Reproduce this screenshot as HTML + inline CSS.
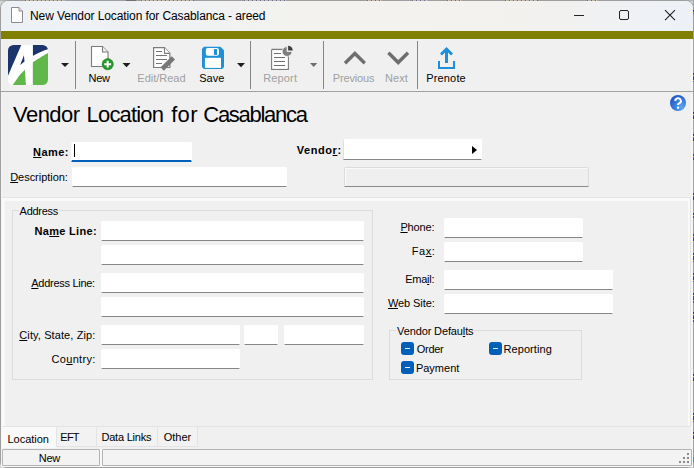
<!DOCTYPE html>
<html><head><meta charset="utf-8">
<style>
*{box-sizing:border-box;margin:0;padding:0}
html,body{width:694px;height:468px;overflow:hidden;background:#d6d6d6;font-family:"Liberation Sans",sans-serif;}
.a{position:absolute}
.t{position:absolute;font-size:11px;line-height:11px;white-space:nowrap;color:#000}
.inp{position:absolute;background:#fff;border:1px solid #fff;border-bottom:1px solid #868686;border-radius:2px 2px 1px 1px;height:20px}
.grp{position:absolute;border:1px solid #dcdcdc}
.cb{position:absolute;width:13px;height:13px;background:#005fb8;border-radius:3px}
.cb:after{content:"";position:absolute;left:4px;top:6px;width:5px;height:1px;background:#e4ecf6}
.sep{position:absolute;top:41px;width:1px;height:48px;background:#858585}
.tab{position:absolute;top:427px;height:20px;background:#f2f2f2;border:1px solid #e4e4e4;border-top:0}
.sp{position:absolute;top:449px;height:17px;background:#f3f3f3;border:1px solid #b4b4b4;border-radius:1px}
u{text-decoration:underline;text-underline-offset:1px;text-decoration-thickness:1px;text-decoration-skip-ink:none}
</style></head><body>
<!-- outside top row -->
<div class="a" style="left:0;top:0;width:694px;height:1px;background:#b4b4b4"></div>
<div class="a" style="left:693px;top:0;width:1px;height:468px;background:#a8a8a8"></div>
<!-- window -->
<div class="a" style="left:0;top:0;width:694px;height:468px;border:1px solid #9e9e9e;border-radius:8px 8px 6px 6px;background:#f0f0f0;overflow:hidden">
 <div class="a" style="left:0;top:0;width:692px;height:30px;background:linear-gradient(90deg,#edf1f6 0%,#eff1f4 22%,#f2f2f0 38%,#f4f2ee 55%,#f2f1ef 80%,#eff1f5 92%,#edf1f7 100%)"></div>
 <div class="a" style="left:0;top:30px;width:692px;height:8px;background:#808000"></div>
</div>
<!-- title bar icons -->
<svg class="a" style="left:10px;top:6px" width="14" height="18" viewBox="0 0 14 18"><path d="M1.5 1.5h7.5l3.5 3.5v11.5h-11z" fill="#fff" stroke="#8a8a8a"/><path d="M9 1.5v3.5h3.5" fill="#e8e8e8" stroke="#8a8a8a"/></svg>
<div class="a" style="left:574px;top:15px;width:10px;height:1px;background:#222"></div>
<div class="a" style="left:619px;top:10px;width:10px;height:10px;border:1px solid #222;border-radius:2px"></div>
<svg class="a" style="left:664px;top:9px" width="12" height="12" viewBox="0 0 12 12"><path d="M1 1.2L11 11.2M11 1.2L1 11.2" stroke="#1a1a1a" stroke-width="1.05"/></svg>
<!-- left/right inner highlight -->
<div class="a" style="left:1px;top:39px;width:1px;height:428px;background:#f6f6f6"></div>
<div class="a" style="left:691px;top:39px;width:2px;height:428px;background:#f6f6f6"></div>
<!-- toolbar -->
<div class="a" style="left:1px;top:91px;width:692px;height:1px;background:#a0a0a0"></div>
<svg class="a" style="left:8px;top:45px" width="40" height="40" viewBox="0 0 40 40">
<defs><clipPath id="lc"><rect x="0" y="0" width="40" height="40" rx="5.5"/></clipPath></defs>
<g clip-path="url(#lc)">
<rect width="40" height="40" fill="#fff"/>
<path d="M-1 -1H13.7L-1 33Z" fill="#1b356b"/>
<path d="M24.9 -1H41V4 C39.5 4.5 34.7 6.1 32 7.2 C29.3 8.3 26.1 10.2 24.9 10.8Z" fill="#1b356b"/>
<path d="M15.9 10.3L16.5 16.4L12.2 19.9Z" fill="#1b356b"/>
<path d="M3.5 42 C3.8 41.6 4 41.3 5.1 39.6 C6.2 37.9 8.6 34.1 10.3 31.9 C12 29.7 13.1 28.6 15.4 26.3 C17.7 24 19.7 20.9 24 17.8 C28.3 14.7 38.2 9.1 41 7.4 V41 H3.5Z" fill="#62b74a"/>
<path d="M16.7 22L24.8 14V41H18Z" fill="#fff"/>
</g></svg>
<div class="sep" style="left:75px"></div>
<div class="sep" style="left:250px"></div>
<div class="sep" style="left:323px"></div>
<div class="sep" style="left:417px"></div>
<svg class="a" style="left:0;top:0" width="694" height="100" viewBox="0 0 694 100">
<!-- logo dropdown -->
<path d="M61 63h8l-4 4z" fill="#1e1e1e"/>
<!-- New -->
<path d="M91.5 46.5h11l5.5 5.5v14.5h-16.5z" fill="#fff" stroke="#7c7c7c" stroke-width="1.1"/>
<path d="M102.5 46.5v5.5h5.5" fill="#f2f2f2" stroke="#7c7c7c" stroke-width="1.1"/>
<circle cx="107.7" cy="64.2" r="5.6" fill="#24992c" stroke="#1d7e24" stroke-width="0.6"/>
<path d="M107.7 60.8v6.8M104.3 64.2h6.8" stroke="#fff" stroke-width="2"/>
<path d="M122.5 63h8l-4 4.3z" fill="#1e1e1e"/>
<!-- Edit/Read -->
<path d="M153.6 47.6h10.9l5.4 5.8v14.1h-16.3z" fill="#fff" stroke="#7c7c7c" stroke-width="1.2"/>
<path d="M164.5 47.6v5.8h5.4" fill="#fff" stroke="#7c7c7c" stroke-width="1.1"/>
<path d="M156 51.5h6M156 55.5h11M156 59.5h11M156 63.5h6" stroke="#767676" stroke-width="1"/>

<path d="M173.4 57.8L162.2 69" stroke="#777" stroke-width="4.6"/>
<!-- Save -->
<path d="M204 46.7H220.5L224 50.2V67L222.1 68.9H203.9L202 67V48.7Z" fill="#1e90d8"/>
<rect x="205.8" y="47.9" width="13.2" height="7.8" rx="2" fill="#fff"/>
<rect x="213.9" y="49.1" width="3.1" height="5.8" fill="#1e90d8"/>
<rect x="204.9" y="57.8" width="16.1" height="10.1" fill="#fff"/>
<path d="M237 63h8l-4 4.3z" fill="#1e1e1e"/>
<!-- Report -->
<path d="M271.7 49.5h12.5v0M271.7 49.5v19.8h16.6v-14" fill="#fff" stroke="#7c7c7c" stroke-width="1.3"/>
<rect x="272.4" y="50.2" width="15.2" height="18.4" fill="#fff"/>
<path d="M274 53.5h7M274 57.5h11M274 61.5h11M274 65.5h11" stroke="#6e6e6e" stroke-width="1"/>
<path d="M287.1 51.5v-4.9a4.9 4.9 0 1 0 4.9 4.9z" fill="#7e7e7e" stroke="#f0f0f0" stroke-width="0.8"/>
<path d="M288.1 50.5v-4.7a4.7 4.7 0 0 1 4.7 4.7z" fill="#3e3e3e"/>
<path d="M310 63h7.3l-3.65 4z" fill="#6e6e6e"/>
<!-- Previous / Next -->
<path d="M345 63.3L354.9 53.5L364.8 63.3" fill="none" stroke="#6e6e6e" stroke-width="3.4"/>
<path d="M388.4 52.7L398.2 62.5L408 52.7" fill="none" stroke="#6e6e6e" stroke-width="3.4"/>
<!-- Prenote -->
<path d="M441 54.5l5.5-5.5 5.5 5.5" fill="none" stroke="#1b8fd7" stroke-width="2.8"/>
<rect x="445" y="50" width="3" height="13" fill="#1b8fd7"/>
<path d="M439 61v7h15v-7" fill="none" stroke="#1b8fd7" stroke-width="2"/>
</svg>
<!-- header -->
<svg class="a" style="left:669px;top:94px" width="18" height="18" viewBox="0 0 18 18"><defs><radialGradient id="hg" cx="0.7" cy="0.75" r="0.8"><stop offset="0" stop-color="#5aa8f0"/><stop offset="1" stop-color="#1f55c8"/></radialGradient></defs><circle cx="9" cy="9" r="8" fill="url(#hg)"/><path d="M6.3 7a2.8 2.6 0 1 1 3.8 2.3c-.9.4-1.1.8-1.1 1.8" fill="none" stroke="#fff" stroke-width="2"/><rect x="8" y="12.6" width="2.1" height="2.1" fill="#fff"/></svg>
<div class="inp" style="left:71px;top:142px;width:121px;border-bottom:2px solid #005fb8;border-radius:2px 2px 1px 1px"></div>
<div class="a" style="left:74px;top:144px;width:1px;height:13px;background:#000"></div>
<div class="inp" style="left:72px;top:167px;width:215px"></div>
<div class="inp" style="left:343px;top:139px;width:139px;height:21px;border-left-color:#e0e0e0"></div>
<div class="a" style="left:472px;top:146px;width:0;height:0;border-top:4px solid transparent;border-bottom:4px solid transparent;border-left:5px solid #000"></div>
<div class="inp" style="left:344px;top:167px;width:245px;background:#efefef;border-color:#dcdcdc;border-bottom-color:#8a8a8a;box-shadow:inset 1px 1px 0 #fafafa"></div>
<!-- tab page -->
<div class="a" style="left:2px;top:197px;width:689px;height:230px;border-top:1px solid #e4e4e4;border-right:1px solid #e4e4e4;border-bottom:1px solid #e4e4e4"></div>
<div class="a" style="left:2px;top:198px;width:688px;height:228px;border:3px solid #f9f9f9;border-right-width:2px;border-bottom-width:0"></div>
<!-- address group -->
<div class="grp" style="left:12px;top:210px;width:361px;height:170px"></div>
<div class="a" style="left:19px;top:205px;width:40px;height:10px;background:#f0f0f0"></div>
<div class="inp" style="left:101px;top:221px;width:263px"></div>
<div class="inp" style="left:101px;top:245px;width:263px"></div>
<div class="inp" style="left:101px;top:273px;width:263px"></div>
<div class="inp" style="left:101px;top:297px;width:263px"></div>
<div class="inp" style="left:101px;top:325px;width:139px"></div>
<div class="inp" style="left:244px;top:325px;width:34px"></div>
<div class="inp" style="left:284px;top:325px;width:80px"></div>
<div class="inp" style="left:101px;top:349px;width:139px"></div>
<!-- right column -->
<div class="inp" style="left:444px;top:218px;width:139px"></div>
<div class="inp" style="left:444px;top:242px;width:139px"></div>
<div class="inp" style="left:444px;top:270px;width:169px"></div>
<div class="inp" style="left:444px;top:294px;width:169px"></div>
<div class="grp" style="left:389px;top:330px;width:193px;height:50px"></div>
<div class="a" style="left:396px;top:325px;width:78px;height:10px;background:#f0f0f0"></div>
<div class="cb" style="left:401px;top:342px"></div>
<div class="cb" style="left:401px;top:361px"></div>
<div class="cb" style="left:489px;top:342px"></div>
<!-- bottom strip (tabs + status) -->
<div class="a" style="left:2px;top:427px;width:689px;height:40px;background:#f0f0f0"></div>
<div class="a" style="left:2px;top:427px;width:55px;height:21px;background:#f9f9f9"></div>
<div class="tab" style="left:56px;width:41px"></div>
<div class="tab" style="left:96px;width:62px"></div>
<div class="tab" style="left:157px;width:41px"></div>
<div class="a" style="left:2px;top:449px;width:690px;height:18px;background:#f8f8f8"></div>

<!-- status bar -->
<div class="sp" style="left:2px;width:98px"></div>
<div class="sp" style="left:102px;width:590px"></div>
<svg class="a" style="left:678px;top:452px" width="12" height="12" viewBox="0 0 12 12" fill="#8a8a8a"><rect x="9" y="1" width="2" height="2"/><rect x="5" y="5" width="2" height="2"/><rect x="9" y="5" width="2" height="2"/><rect x="1" y="9" width="2" height="2"/><rect x="5" y="9" width="2" height="2"/><rect x="9" y="9" width="2" height="2"/></svg>
<div class="a" style="left:25px;top:0;width:40px;height:1px;background:repeating-linear-gradient(90deg,#6a6a86 0 1px,#d2c29e 1px 2px,#b4b4bc 2px 4px)"></div><div class="a" style="left:141px;top:0;width:53px;height:1px;background:repeating-linear-gradient(90deg,#6a6a86 0 1px,#d2c29e 1px 2px,#b4b4bc 2px 4px)"></div><div class="a" style="left:244px;top:0;width:42px;height:1px;background:repeating-linear-gradient(90deg,#6a6a86 0 1px,#d2c29e 1px 2px,#b4b4bc 2px 4px)"></div><div class="a" style="left:367px;top:0;width:15px;height:1px;background:repeating-linear-gradient(90deg,#6a6a86 0 1px,#d2c29e 1px 2px,#b4b4bc 2px 4px)"></div><div class="a" style="left:412px;top:0;width:16px;height:1px;background:repeating-linear-gradient(90deg,#6a6a86 0 1px,#d2c29e 1px 2px,#b4b4bc 2px 4px)"></div><div class="a" style="left:447px;top:0;width:15px;height:1px;background:repeating-linear-gradient(90deg,#6a6a86 0 1px,#d2c29e 1px 2px,#b4b4bc 2px 4px)"></div><div class="a" style="left:505px;top:0;width:33px;height:1px;background:repeating-linear-gradient(90deg,#6a6a86 0 1px,#d2c29e 1px 2px,#b4b4bc 2px 4px)"></div><div class="a" style="left:587px;top:0;width:11px;height:1px;background:repeating-linear-gradient(90deg,#6a6a86 0 1px,#d2c29e 1px 2px,#b4b4bc 2px 4px)"></div><div class="a" style="left:126px;top:0;width:10px;height:1px;background:#707070"></div>
<div class="a" style="left:693px;top:10px;width:1px;height:4px;background:repeating-linear-gradient(180deg,#3a3a50 0 2px,#c8b080 2px 3px,#50506a 3px 5px)"></div><div class="a" style="left:693px;top:73px;width:1px;height:9px;background:repeating-linear-gradient(180deg,#3a3a50 0 2px,#c8b080 2px 3px,#50506a 3px 5px)"></div><div class="a" style="left:693px;top:112px;width:1px;height:8px;background:repeating-linear-gradient(180deg,#3a3a50 0 2px,#c8b080 2px 3px,#50506a 3px 5px)"></div><div class="a" style="left:693px;top:134px;width:1px;height:8px;background:repeating-linear-gradient(180deg,#3a3a50 0 2px,#c8b080 2px 3px,#50506a 3px 5px)"></div><div class="a" style="left:693px;top:154px;width:1px;height:6px;background:repeating-linear-gradient(180deg,#3a3a50 0 2px,#c8b080 2px 3px,#50506a 3px 5px)"></div><div class="a" style="left:693px;top:193px;width:1px;height:7px;background:repeating-linear-gradient(180deg,#3a3a50 0 2px,#c8b080 2px 3px,#50506a 3px 5px)"></div><div class="a" style="left:693px;top:213px;width:1px;height:5px;background:repeating-linear-gradient(180deg,#3a3a50 0 2px,#c8b080 2px 3px,#50506a 3px 5px)"></div><div class="a" style="left:693px;top:234px;width:1px;height:8px;background:repeating-linear-gradient(180deg,#3a3a50 0 2px,#c8b080 2px 3px,#50506a 3px 5px)"></div><div class="a" style="left:693px;top:253px;width:1px;height:9px;background:repeating-linear-gradient(180deg,#3a3a50 0 2px,#c8b080 2px 3px,#50506a 3px 5px)"></div><div class="a" style="left:693px;top:273px;width:1px;height:9px;background:repeating-linear-gradient(180deg,#3a3a50 0 2px,#c8b080 2px 3px,#50506a 3px 5px)"></div><div class="a" style="left:693px;top:293px;width:1px;height:10px;background:repeating-linear-gradient(180deg,#3a3a50 0 2px,#c8b080 2px 3px,#50506a 3px 5px)"></div><div class="a" style="left:693px;top:312px;width:1px;height:10px;background:repeating-linear-gradient(180deg,#3a3a50 0 2px,#c8b080 2px 3px,#50506a 3px 5px)"></div><div class="a" style="left:693px;top:374px;width:1px;height:8px;background:repeating-linear-gradient(180deg,#3a3a50 0 2px,#c8b080 2px 3px,#50506a 3px 5px)"></div><div class="a" style="left:693px;top:413px;width:1px;height:9px;background:repeating-linear-gradient(180deg,#3a3a50 0 2px,#c8b080 2px 3px,#50506a 3px 5px)"></div><div class="a" style="left:693px;top:432px;width:1px;height:8px;background:repeating-linear-gradient(180deg,#3a3a50 0 2px,#c8b080 2px 3px,#50506a 3px 5px)"></div><div class="a" style="left:693px;top:457px;width:1px;height:5px;background:#4f86c0"></div>
<div class="t" style="left:30.00px;top:10px;font-size:12px;line-height:12px;letter-spacing:-0.098px;color:#000">New Vendor Location for Casablanca - areed</div>
<div class="t" style="left:13.10px;top:104px;font-size:22px;line-height:22px;letter-spacing:-0.56px;color:#000">Vendor</div>
<div class="t" style="left:86.60px;top:104px;font-size:22px;line-height:22px;letter-spacing:-0.829px;color:#000">Location</div>
<div class="t" style="left:171.15px;top:104px;font-size:22px;line-height:22px;letter-spacing:0.35px;color:#000">for</div>
<div class="t" style="left:203.30px;top:104px;font-size:22px;line-height:22px;letter-spacing:-1.289px;color:#000">Casablanca</div>
<div class="t" style="left:33.10px;top:147px;font-size:11px;line-height:11px;font-weight:bold;letter-spacing:0.45px;color:#000"><u>N</u>ame:</div>
<div class="t" style="left:10.20px;top:172px;font-size:11px;line-height:11px;letter-spacing:-0.036px;color:#000"><u>D</u>escription:</div>
<div class="t" style="left:296.85px;top:145px;font-size:11px;line-height:11px;font-weight:bold;letter-spacing:0.55px;color:#000">Vendo<u>r</u>:</div>
<div class="t" style="left:19.60px;top:206px;font-size:11px;line-height:11px;letter-spacing:-0.267px;color:#000">Address</div>
<div class="t" style="left:34.50px;top:226px;font-size:11px;line-height:11px;font-weight:bold;letter-spacing:0.311px;color:#000">Na<u>m</u>e Line:</div>
<div class="t" style="left:31.30px;top:278px;font-size:11px;line-height:11px;letter-spacing:-0.283px;color:#000"><u>A</u>ddress Line:</div>
<div class="t" style="left:19.30px;top:330px;font-size:11px;line-height:11px;letter-spacing:0.1px;color:#000"><u>C</u>ity, State, Zip:</div>
<div class="t" style="left:51.45px;top:354px;font-size:11px;line-height:11px;letter-spacing:0.329px;color:#000">Co<u>u</u>ntry:</div>
<div class="t" style="left:400.40px;top:222px;font-size:11px;line-height:11px;letter-spacing:-0.12px;color:#000"><u>P</u>hone:</div>
<div class="t" style="left:411.80px;top:246px;font-size:11px;line-height:11px;letter-spacing:0.533px;color:#000">Fa<u>x</u>:</div>
<div class="t" style="left:405.25px;top:274px;font-size:11px;line-height:11px;letter-spacing:-0.26px;color:#000">Ema<u>i</u>l:</div>
<div class="t" style="left:387.95px;top:298px;font-size:11px;line-height:11px;letter-spacing:-0.087px;color:#000"><u>W</u>eb Site:</div>
<div class="t" style="left:397.10px;top:326px;font-size:11px;line-height:11px;letter-spacing:-0.129px;color:#000">Vendor Defau<u>l</u>ts</div>
<div class="t" style="left:416.80px;top:344px;font-size:11px;line-height:11px;letter-spacing:-0.3px;color:#000">Order</div>
<div class="t" style="left:415.90px;top:363px;font-size:11px;line-height:11px;letter-spacing:0.0px;color:#000">Payment</div>
<div class="t" style="left:503.45px;top:344px;font-size:11px;line-height:11px;letter-spacing:0.087px;color:#000">Reporting</div>
<div class="t" style="left:7.50px;top:434px;font-size:11px;line-height:11px;letter-spacing:-0.029px;color:#000">Location</div>
<div class="t" style="left:60.30px;top:432px;font-size:11px;line-height:11px;letter-spacing:-0.75px;color:#000">EFT</div>
<div class="t" style="left:101.50px;top:432px;font-size:11px;line-height:11px;letter-spacing:-0.222px;color:#000">Data Links</div>
<div class="t" style="left:163.70px;top:432px;font-size:11px;line-height:11px;letter-spacing:0.0px;color:#000">Other</div>
<div class="t" style="left:88.45px;top:73px;font-size:11px;line-height:11px;letter-spacing:-0.25px;color:#000">New</div>
<div class="t" style="left:137.35px;top:73px;font-size:11px;line-height:11px;letter-spacing:-0.012px;color:#a0a0a0">Edit/Read</div>
<div class="t" style="left:199.20px;top:73px;font-size:11px;line-height:11px;letter-spacing:0.0px;color:#000">Save</div>
<div class="t" style="left:263.25px;top:73px;font-size:11px;line-height:11px;letter-spacing:0.14px;color:#a0a0a0">Report</div>
<div class="t" style="left:332.80px;top:73px;font-size:11px;line-height:11px;letter-spacing:-0.171px;color:#a0a0a0">Previous</div>
<div class="t" style="left:384.90px;top:73px;font-size:11px;line-height:11px;letter-spacing:0.133px;color:#a0a0a0">Next</div>
<div class="t" style="left:426.20px;top:73px;font-size:11px;line-height:11px;letter-spacing:0.167px;color:#000">Prenote</div>
<div class="t" style="left:38.75px;top:453px;font-size:11px;line-height:11px;letter-spacing:-0.25px;color:#000">New</div>
</body></html>
